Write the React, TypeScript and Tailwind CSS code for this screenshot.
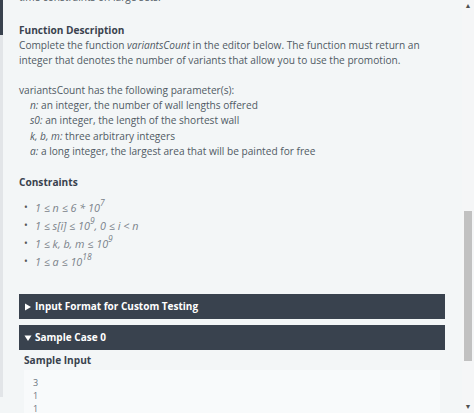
import React from 'react'

const params = [
  { k: 'n:', v: 'an integer, the number of wall lengths offered' },
  { k: 's0:', v: 'an integer, the length of the shortest wall' },
  { k: 'k, b, m:', v: 'three arbitrary integers' },
  { k: 'a:', v: 'a long integer, the largest area that will be painted for free' },
]

function Bar({ open, label }: { open?: boolean; label: string }) {
  return (
    <div className="h-[25px] bg-[#39424e] flex items-center pl-[5px] text-white font-bold text-[10px]">
      <svg width="8" height="8" viewBox="0 0 8 8" className="mr-[3px]">
        {open ? <path d="M0.5 1.5 H7.5 L4 7 Z" fill="#fff" /> : <path d="M1 0.5 V7.5 L7 4 Z" fill="#fff" />}
      </svg>
      {label}
    </div>
  )
}

function Item({ children }: { children: React.ReactNode }) {
  return (
    <li className="h-[18px] flex items-center">
      <span className="not-italic w-[11px] text-[10px] text-[#555]">•</span>
      {children}
    </li>
  )
}

export default function App() {
  return (
    <div
      className="w-[474px] h-[413px] overflow-hidden flex bg-[#f3f6f7] text-[#505a64]"
      style={{ fontFamily: '"Open Sans", "Liberation Sans", sans-serif' }}
    >
      <div className="w-[3px] flex flex-col">
        <div className="h-[35px] bg-[#39424e]" />
        <div className="h-[362px] bg-[#e2e5e8]" />
      </div>

      <div className="flex-1 pl-[16px] pr-[17px] text-[10.15px] leading-[15px]">
        <p className="-mt-[10px]">time constraints on large sets.</p>

        <h3 className="mt-[18px] font-bold text-[#39424e]">Function Description</h3>
        <p>
          Complete the function <em>variantsCount</em> in the editor below. The function must return an
          integer that denotes the number of variants that allow you to use the promotion.
        </p>

        <p className="mt-[15px]">variantsCount has the following parameter(s):</p>
        <div className="pl-[11px] leading-[15.3px]">
          {params.map((p) => (
            <div key={p.k}>
              <em>{p.k}</em> {p.v}
            </div>
          ))}
        </div>

        <h3 className="mt-[16px] font-bold text-[#39424e]">Constraints</h3>
        <ul className="mt-[8px] pl-[5px] italic text-[#7a828a] text-[10.8px]">
          <Item>1 ≤ n ≤ 6 * 10<sup className="text-[8.5px] -top-[4px]">7</sup></Item>
          <Item>1 ≤ s[i] ≤ 10<sup className="text-[8.5px] -top-[4px]">9</sup>, 0 ≤ i &lt; n</Item>
          <Item>1 ≤ k, b, m ≤ 10<sup className="text-[8.5px] -top-[4px]">9</sup></Item>
          <Item>1 ≤ a ≤ 10<sup className="text-[8.5px] -top-[4px]">18</sup></Item>
        </ul>

        <div className="mt-[24px] flex flex-col gap-[6px]">
          <Bar label="Input Format for Custom Testing" />
          <Bar open label="Sample Case 0" />
        </div>

        <div className="pl-[5px] pr-[5px]">
          <h4 className="mt-[3px] font-bold text-[#39424e]">Sample Input</h4>
          <div className="mt-[2px] bg-[#f8fafb] pl-[9px] pt-[6px] text-[9px] leading-[13px] text-[#6b747d]">
            <div>3</div>
            <div>1</div>
            <div>1</div>
          </div>
        </div>
      </div>

      <div className="w-[12px] bg-[#f5f6f7] flex flex-col items-center">
        <div className="text-[7px] text-[#505050] leading-[10px] mt-[1px]">▲</div>
        <div className="mt-[200px] w-[8px] h-[150px] bg-[#c1c1c1]" />
        <div className="mt-auto text-[7px] text-[#505050] leading-[10px] mb-[1px]">▼</div>
      </div>
    </div>
  )
}
